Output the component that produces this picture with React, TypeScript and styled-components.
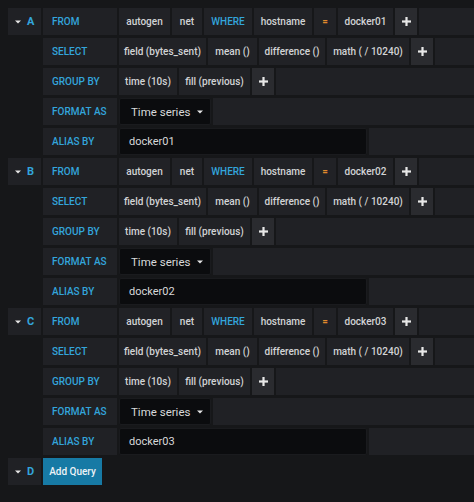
import * as React from 'react';

import styled, { createGlobalStyle } from 'styled-components';

const GlobalStyle = createGlobalStyle`
  html, body {
    margin: 0;
    background-color: #161719;
    font-family: Roboto, "Liberation Sans", sans-serif;
  }
`;

const Page = styled.div`
  display: flex;
  flex-direction: column;
  gap: 3px;
  padding: 8px 0 8px 8px;
`;

const QueryBlock = styled.div`
  display: grid;
  grid-template-columns: 33px 1fr;
  column-gap: 2px;
`;

const LetterCell = styled.div`
  display: flex;
  align-items: center;
  gap: 6px;
  height: 27px;
  padding-left: 7px;
  box-sizing: border-box;
  background-color: #202125;
  color: #33a5dc;
  font-size: 11px;
  font-weight: 700;
`;

const Rows = styled.div`
  display: flex;
  flex-direction: column;
  gap: 3px;
`;

const Row = styled.div`
  display: flex;
  gap: 2px;
  height: 27px;
`;

const Keyword = styled.div`
  display: flex;
  align-items: center;
  flex: 0 0 74px;
  padding-left: 9px;
  box-sizing: border-box;
  background-color: #202125;
  color: #33a5dc;
  font-size: 10px;
  font-weight: 500;
`;

const Segment = styled.div<{ $width: number; $tone?: 'text' | 'keyword' | 'operator' }>`
  display: flex;
  align-items: center;
  justify-content: center;
  flex: 0 0 ${(p) => p.$width}px;
  background-color: #212226;
  color: ${(p) => (p.$tone === 'keyword' ? '#33a5dc' : p.$tone === 'operator' ? '#e08a2c' : '#d2d3d5')};
  font-size: 10px;
  font-weight: 500;
  white-space: nowrap;
`;

const PlusButton = styled.div`
  display: flex;
  align-items: center;
  justify-content: center;
  flex: 0 0 22px;
  background-color: #2a2b2f;
`;

const Filler = styled.div`
  flex: 1;
  background-color: #202125;
`;

const SelectBox = styled.div`
  display: flex;
  align-items: center;
  justify-content: space-between;
  flex: 0 0 92px;
  padding: 0 7px 0 11px;
  box-sizing: border-box;
  background-color: #0b0c0e;
  border: 1px solid #1a1b1e;
  border-radius: 2px;
  color: #d8d9da;
  font-size: 11.5px;
`;

const AliasInput = styled.div`
  display: flex;
  align-items: center;
  flex: 0 0 248px;
  padding-left: 9px;
  box-sizing: border-box;
  background-color: #0b0c0e;
  border: 1px solid #1a1b1e;
  border-radius: 2px;
  color: #d8d9da;
  font-size: 11px;
`;

const AddButton = styled.div`
  display: flex;
  align-items: center;
  justify-content: center;
  flex: 0 0 59px;
  background-color: #177aa5;
  color: #eef3f6;
  font-size: 10px;
  font-weight: 500;
`;

const Caret = ({ color = '#e6e6e6' }: { color?: string }) => (
  <svg width="6" height="4" viewBox="0 0 6 4">
    <polygon points="0,0.5 6,0.5 3,3.5" fill={color} />
  </svg>
);

const PlusIcon = () => (
  <svg width="9" height="9" viewBox="0 0 9 9">
    <rect x="3.4" y="0" width="2.2" height="9" fill="#e8e8e8" />
    <rect x="0" y="3.4" width="9" height="2.2" fill="#e8e8e8" />
  </svg>
);

const queries = [
  { letter: 'A', host: 'docker01' },
  { letter: 'B', host: 'docker02' },
  { letter: 'C', host: 'docker03' },
];

const Query = ({ letter, host }: { letter: string; host: string }) => (
  <QueryBlock>
    <LetterCell>
      <Caret />
      {letter}
    </LetterCell>
    <Rows>
      <Row>
        <Keyword>FROM</Keyword>
        <Segment $width={51}>autogen</Segment>
        <Segment $width={30}>net</Segment>
        <Segment $width={48} $tone="keyword">WHERE</Segment>
        <Segment $width={58}>hostname</Segment>
        <Segment $width={22} $tone="operator">=</Segment>
        <Segment $width={55}>{host}</Segment>
        <PlusButton><PlusIcon /></PlusButton>
        <Filler />
      </Row>
      <Row>
        <Keyword>SELECT</Keyword>
        <Segment $width={87}>field (bytes_sent)</Segment>
        <Segment $width={49}>mean ()</Segment>
        <Segment $width={66}>difference ()</Segment>
        <Segment $width={82}>math ( / 10240)</Segment>
        <PlusButton><PlusIcon /></PlusButton>
        <Filler />
      </Row>
      <Row>
        <Keyword>GROUP BY</Keyword>
        <Segment $width={58}>time (10s)</Segment>
        <Segment $width={71}>fill (previous)</Segment>
        <PlusButton><PlusIcon /></PlusButton>
        <Filler />
      </Row>
      <Row>
        <Keyword>FORMAT AS</Keyword>
        <SelectBox>
          Time series
          <Caret />
        </SelectBox>
        <Filler />
      </Row>
      <Row>
        <Keyword>ALIAS BY</Keyword>
        <AliasInput>{host}</AliasInput>
        <Filler />
      </Row>
    </Rows>
  </QueryBlock>
);

export default function App() {
  return (
    <>
      <GlobalStyle />
      <Page>
        {queries.map((q) => (
          <Query key={q.letter} letter={q.letter} host={q.host} />
        ))}
        <QueryBlock>
          <LetterCell>
            <Caret />
            D
          </LetterCell>
          <Row>
            <AddButton>Add Query</AddButton>
          </Row>
        </QueryBlock>
      </Page>
    </>
  );
}
